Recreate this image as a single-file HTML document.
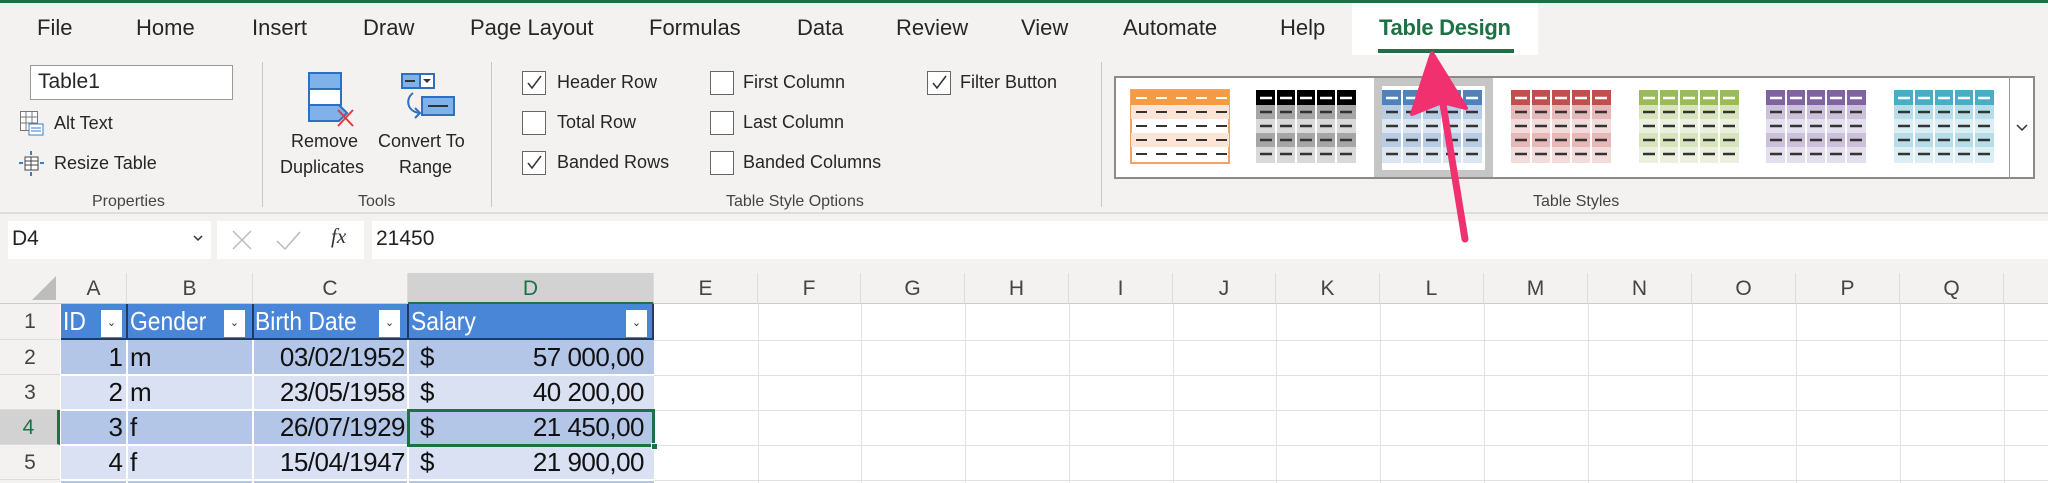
<!DOCTYPE html>
<html><head><meta charset="utf-8"><style>
*{margin:0;padding:0;box-sizing:border-box}
body{width:2048px;height:483px;overflow:hidden;background:#f3f2f1;font-family:"Liberation Sans",sans-serif;position:relative;color:#222}
.a{position:absolute;white-space:nowrap}
.tab{position:absolute;top:15px;font-size:22px;color:#262626}
.t{font-size:18px;color:#262626}
.lbl{font-size:16px;color:#444}
.cb{position:absolute;width:24px;height:24px;border:1px solid #666;background:#fff}
.cb svg{position:absolute;left:2px;top:2px}
.sep{position:absolute;top:62px;width:1px;height:145px;background:#c8c8c8}
.cell{position:absolute;font-size:26px;color:#111;font-family:"Liberation Sans",sans-serif}
.hd{transform:scaleX(0.88);transform-origin:left center;color:#fff}
.ch{position:absolute;top:273px;height:31px;font-size:21px;color:#444;text-align:center;line-height:31px;border-right:1px solid #dcdcdc}
.rh{position:absolute;left:0;width:60px;font-size:21px;color:#444;text-align:center;border-bottom:1px solid #dcdcdc}
.fb{position:absolute;width:21px;height:27px;background:#fff;top:310px;font-size:11px;color:#333;text-align:center;line-height:27px}
</style></head><body>
<div class="a" style="left:0;top:0;width:2048px;height:3px;background:#1e7145"></div>
<div class="tab" style="left:37px">File</div>
<div class="tab" style="left:136px">Home</div>
<div class="tab" style="left:252px">Insert</div>
<div class="tab" style="left:363px">Draw</div>
<div class="tab" style="left:470px">Page Layout</div>
<div class="tab" style="left:649px">Formulas</div>
<div class="tab" style="left:797px">Data</div>
<div class="tab" style="left:896px">Review</div>
<div class="tab" style="left:1021px">View</div>
<div class="tab" style="left:1123px">Automate</div>
<div class="tab" style="left:1280px">Help</div>
<div class="a" style="left:1352px;top:3px;width:186px;height:52px;background:#fff"></div>
<div class="tab" style="left:1379px;color:#1e7145;font-weight:bold;letter-spacing:-0.3px">Table Design</div>
<div class="a" style="left:1378px;top:49px;width:136px;height:4px;background:#1e7145"></div>

<div class="a" style="left:0;top:212px;width:2048px;height:2px;background:#ddd"></div>
<div class="a" style="left:0;top:214px;width:2048px;height:62px;background:#f3f2f1"></div>

<div class="a" style="left:30px;top:65px;width:203px;height:35px;background:#fff;border:1px solid #999"></div>
<div class="a t" style="left:38px;top:70px;font-size:21px">Table1</div>
<svg class="a" style="left:20px;top:111px" width="26" height="26"><rect x="0.5" y="0.5" width="17" height="19" fill="#fff" stroke="#777"/><path d="M0 6h18M0 12h18M6 0v20M12 0v20" stroke="#777"/><rect x="9" y="13" width="14" height="11" fill="#fff" stroke="#3b7dc8"/><path d="M11 17h10M11 20h10" stroke="#3b7dc8"/></svg>
<div class="a t" style="left:54px;top:113px">Alt Text</div>
<svg class="a" style="left:18px;top:150px" width="28" height="28"><rect x="7" y="7" width="13" height="13" fill="#fff" stroke="#444"/><path d="M7 11h13M7 15h13M13 7v13" stroke="#444"/><path d="M13 1v4M13 22v4M1 13h4M22 13h4" stroke="#3b7dc8" stroke-width="2"/></svg>
<div class="a t" style="left:54px;top:153px">Resize Table</div>
<div class="a lbl" style="left:92px;top:193px">Properties</div>
<div class="sep" style="left:262px"></div>

<svg class="a" style="left:308px;top:72px" width="50" height="55"><rect x="1" y="1" width="32" height="16" fill="#7fb2e8" stroke="#2f6fbf" stroke-width="2"/><rect x="1" y="17" width="32" height="16" fill="#fff" stroke="#2f6fbf" stroke-width="2"/><path d="M1 33h30l8 8-8 8H1z" fill="#7fb2e8" stroke="#2f6fbf" stroke-width="2"/><path d="M30 38l15 16M45 38L30 54" stroke="#e03a3a" stroke-width="2"/></svg>
<div class="a t" style="left:291px;top:131px">Remove</div>
<div class="a t" style="left:280px;top:157px">Duplicates</div>
<svg class="a" style="left:401px;top:73px" width="56" height="50"><rect x="1" y="1" width="18" height="14" fill="#7fb2e8" stroke="#2f6fbf" stroke-width="2"/><rect x="19" y="1" width="14" height="14" fill="#fff" stroke="#2f6fbf" stroke-width="2"/><path d="M4 8h10" stroke="#333" stroke-width="2"/><path d="M22 6l4 4 4-4z" fill="#333"/><rect x="21" y="24" width="32" height="18" fill="#7fb2e8" stroke="#2f6fbf" stroke-width="2"/><path d="M27 33h20" stroke="#333" stroke-width="2"/><path d="M12 20c-8 6-6 18 6 20" fill="none" stroke="#2f6fbf" stroke-width="2"/><path d="M14 35l5 5-5 5" fill="none" stroke="#2f6fbf" stroke-width="2"/></svg>
<div class="a t" style="left:378px;top:131px">Convert To</div>
<div class="a t" style="left:399px;top:157px">Range</div>
<div class="a lbl" style="left:358px;top:193px">Tools</div>
<div class="sep" style="left:491px"></div>

<div class="cb" style="left:522px;top:71px"><svg width="18" height="18"><path d="M3 9l4 5 9-12" fill="none" stroke="#333" stroke-width="1.5"/></svg></div>
<div class="a t" style="left:557px;top:72px">Header Row</div>
<div class="cb" style="left:522px;top:111px"></div>
<div class="a t" style="left:557px;top:112px">Total Row</div>
<div class="cb" style="left:522px;top:151px"><svg width="18" height="18"><path d="M3 9l4 5 9-12" fill="none" stroke="#333" stroke-width="1.5"/></svg></div>
<div class="a t" style="left:557px;top:152px">Banded Rows</div>
<div class="cb" style="left:710px;top:71px"></div>
<div class="a t" style="left:743px;top:72px">First Column</div>
<div class="cb" style="left:710px;top:111px"></div>
<div class="a t" style="left:743px;top:112px">Last Column</div>
<div class="cb" style="left:710px;top:151px"></div>
<div class="a t" style="left:743px;top:152px">Banded Columns</div>
<div class="cb" style="left:927px;top:71px"><svg width="18" height="18"><path d="M3 9l4 5 9-12" fill="none" stroke="#333" stroke-width="1.5"/></svg></div>
<div class="a t" style="left:960px;top:72px">Filter Button</div>
<div class="a lbl" style="left:726px;top:193px">Table Style Options</div>
<div class="sep" style="left:1101px"></div>

<div class="a" style="left:1114px;top:76px;width:921px;height:103px;background:#fff;border:2px solid #8a8a8a"></div>
<div class="a" style="left:2009px;top:76px;width:26px;height:103px;border-left:1px solid #999"></div>
<svg class="a" style="left:2015px;top:123px" width="14" height="10"><path d="M2 2l5 5 5-5" fill="none" stroke="#333" stroke-width="1.5"/></svg>
<div class="a" style="left:1374px;top:78px;width:119px;height:99px;background:#c6c6c6"></div>
<div class="a" style="left:1382px;top:86px;width:103px;height:84px;background:#fff"></div>
<svg class="a" style="left:1128px;top:88px" width="880" height="80">
<defs>
<g id="dl"><path d="M5 0h11M25 0h11M45 0h11M65 0h11M85 0h11" stroke-width="2"/></g>
<g id="dc"><path d="M4 0h12M24 0h12M44 0h12M64 0h12M84 0h12" stroke-width="2.5"/></g>
<g id="vs"><path d="M20 0v73M40 0v73M60 0v73M80 0v73" stroke="#fff" stroke-width="2"/></g>
</defs>
<g transform="translate(3,2)"><rect x="0" y="0" width="98" height="73" fill="#fff" stroke="#f4a366" stroke-width="2"/><rect width="98" height="15" fill="#f59a45"/><rect y="15" width="98" height="14" fill="#fce4d6"/><rect y="43" width="98" height="14" fill="#fce4d6"/>
<use href="#dl" y="8" stroke="#fff"/><use href="#dl" y="22" stroke="#333"/><use href="#dl" y="36" stroke="#333"/><use href="#dl" y="50" stroke="#333"/><use href="#dl" y="64" stroke="#333"/></g>
<g transform="translate(128,2)"><rect width="100" height="15" fill="#000"/><rect y="15" width="100" height="14" fill="#a6a6a6"/><rect y="29" width="100" height="14" fill="#d9d9d9"/><rect y="43" width="100" height="14" fill="#a6a6a6"/><rect y="57" width="100" height="16" fill="#d9d9d9"/><use href="#vs"/>
<use href="#dc" y="8" stroke="#fff"/><use href="#dc" y="22" stroke="#333"/><use href="#dc" y="36" stroke="#333"/><use href="#dc" y="50" stroke="#333"/><use href="#dc" y="64" stroke="#333"/></g>
<g transform="translate(254,2)"><rect width="100" height="15" fill="#4f81bd"/><rect y="15" width="100" height="14" fill="#b8cce4"/><rect y="29" width="100" height="14" fill="#dce6f1"/><rect y="43" width="100" height="14" fill="#b8cce4"/><rect y="57" width="100" height="16" fill="#dce6f1"/><use href="#vs"/>
<use href="#dc" y="8" stroke="#fff"/><use href="#dc" y="22" stroke="#333"/><use href="#dc" y="36" stroke="#333"/><use href="#dc" y="50" stroke="#333"/><use href="#dc" y="64" stroke="#333"/></g>
<g transform="translate(383,2)"><rect width="100" height="15" fill="#c0504d"/><rect y="15" width="100" height="14" fill="#e6b8b7"/><rect y="29" width="100" height="14" fill="#f2dcdb"/><rect y="43" width="100" height="14" fill="#e6b8b7"/><rect y="57" width="100" height="16" fill="#f2dcdb"/><use href="#vs"/>
<use href="#dc" y="8" stroke="#fff"/><use href="#dc" y="22" stroke="#333"/><use href="#dc" y="36" stroke="#333"/><use href="#dc" y="50" stroke="#333"/><use href="#dc" y="64" stroke="#333"/></g>
<g transform="translate(511,2)"><rect width="100" height="15" fill="#9bbb59"/><rect y="15" width="100" height="14" fill="#d8e4bc"/><rect y="29" width="100" height="14" fill="#ebf1de"/><rect y="43" width="100" height="14" fill="#d8e4bc"/><rect y="57" width="100" height="16" fill="#ebf1de"/><use href="#vs"/>
<use href="#dc" y="8" stroke="#fff"/><use href="#dc" y="22" stroke="#333"/><use href="#dc" y="36" stroke="#333"/><use href="#dc" y="50" stroke="#333"/><use href="#dc" y="64" stroke="#333"/></g>
<g transform="translate(638,2)"><rect width="100" height="15" fill="#8064a2"/><rect y="15" width="100" height="14" fill="#ccc0da"/><rect y="29" width="100" height="14" fill="#e4dfec"/><rect y="43" width="100" height="14" fill="#ccc0da"/><rect y="57" width="100" height="16" fill="#e4dfec"/><use href="#vs"/>
<use href="#dc" y="8" stroke="#fff"/><use href="#dc" y="22" stroke="#333"/><use href="#dc" y="36" stroke="#333"/><use href="#dc" y="50" stroke="#333"/><use href="#dc" y="64" stroke="#333"/></g>
<g transform="translate(766,2)"><rect width="100" height="15" fill="#4bacc6"/><rect y="15" width="100" height="14" fill="#b7dee8"/><rect y="29" width="100" height="14" fill="#daeef3"/><rect y="43" width="100" height="14" fill="#b7dee8"/><rect y="57" width="100" height="16" fill="#daeef3"/><use href="#vs"/>
<use href="#dc" y="8" stroke="#fff"/><use href="#dc" y="22" stroke="#333"/><use href="#dc" y="36" stroke="#333"/><use href="#dc" y="50" stroke="#333"/><use href="#dc" y="64" stroke="#333"/></g>
</svg>
<div class="a lbl" style="left:1533px;top:193px">Table Styles</div>

<div class="a" style="left:8px;top:221px;width:203px;height:38px;background:#fff"></div>
<div class="a" style="left:12px;top:227px;font-size:21px;color:#222">D4</div>
<svg class="a" style="left:192px;top:234px" width="12" height="10"><path d="M2 2l4 4 4-4" fill="none" stroke="#333" stroke-width="1.5"/></svg>
<div class="a" style="left:217px;top:221px;width:147px;height:38px;background:#fff"></div>
<svg class="a" style="left:230px;top:228px" width="120" height="26"><path d="M3 3l18 18M21 3L3 21" stroke="#bbb" stroke-width="1.5"/><path d="M47 13l8 8 15-17" fill="none" stroke="#bbb" stroke-width="1.5"/></svg>
<div class="a" style="left:331px;top:224px;font-size:21px;font-style:italic;font-family:'Liberation Serif',serif;color:#333">fx</div>
<div class="a" style="left:372px;top:221px;width:1676px;height:38px;background:#fff"></div>
<div class="a" style="left:376px;top:227px;font-size:21px;color:#222">21450</div>

<div class="a" style="left:0;top:272px;width:2048px;height:211px;background:#fff"></div>
<div class="a" style="left:0;top:272px;width:60px;height:211px;background:#f3f2f1"></div>
<div class="a" style="left:0;top:272px;width:2048px;height:32px;background:#f3f2f1;border-bottom:1px solid #ccc"></div>
<svg class="a" style="left:30px;top:274px" width="28" height="28"><path d="M26 2V26H2z" fill="#bdbdbd"/></svg>
<div class="ch" style="left:61px;width:66px">A</div>
<div class="ch" style="left:127px;width:126px">B</div>
<div class="ch" style="left:253px;width:155px">C</div>
<div class="ch" style="left:408px;width:246px;background:#d2d2d2;color:#1e7145;border-bottom:3px solid #1e7145;height:32px">D</div>
<div class="ch" style="left:654px;width:104px">E</div>
<div class="ch" style="left:758px;width:103px">F</div>
<div class="ch" style="left:861px;width:104px">G</div>
<div class="ch" style="left:965px;width:104px">H</div>
<div class="ch" style="left:1069px;width:104px">I</div>
<div class="ch" style="left:1173px;width:103px">J</div>
<div class="ch" style="left:1276px;width:104px">K</div>
<div class="ch" style="left:1380px;width:104px">L</div>
<div class="ch" style="left:1484px;width:104px">M</div>
<div class="ch" style="left:1588px;width:104px">N</div>
<div class="ch" style="left:1692px;width:104px">O</div>
<div class="ch" style="left:1796px;width:104px">P</div>
<div class="ch" style="left:1900px;width:104px">Q</div>
<svg class="a" style="left:654px;top:304px" width="1394" height="179"><g stroke="#e1e1e1" stroke-width="1"><path d="M104.5 0v179M207.5 0v179M311.5 0v179M415.5 0v179M519.5 0v179M622.5 0v179M726.5 0v179M830.5 0v179M934.5 0v179M1038.5 0v179M1142.5 0v179M1246.5 0v179M1350.5 0v179"/><path d="M0 36.5h1394M0 71.5h1394M0 106.5h1394M0 141.5h1394M0 176.5h1394"/></g></svg>
<div class="rh" style="top:304px;height:36px;line-height:36px">1</div>
<div class="rh" style="top:340px;height:35px;line-height:35px">2</div>
<div class="rh" style="top:375px;height:35px;line-height:35px">3</div>
<div class="rh" style="top:410px;height:35px;line-height:35px;background:#d2d2d2;color:#1e7145;border-right:3px solid #1e7145">4</div>
<div class="rh" style="top:445px;height:35px;line-height:35px">5</div>
<div class="a" style="left:61px;top:304px;width:593px;height:36px;background:#4a86d8;border-bottom:2px solid #1f3a63"></div>
<div class="a" style="left:61px;top:340px;width:593px;height:35px;background:#b4c6e7"></div>
<div class="a" style="left:61px;top:375px;width:593px;height:35px;background:#d9e1f2"></div>
<div class="a" style="left:61px;top:410px;width:593px;height:35px;background:#b4c6e7"></div>
<div class="a" style="left:61px;top:445px;width:593px;height:35px;background:#d9e1f2"></div>
<div class="a" style="left:61px;top:480px;width:593px;height:3px;background:#b4c6e7"></div>
<svg class="a" style="left:61px;top:304px" width="593" height="179"><g stroke="#fff" stroke-width="2"><path d="M66 36v143M192 36v143M347 36v143"/><path d="M0 71h593M0 106h593M0 141h593M0 176h593"/></g><g stroke="#1f3a63" stroke-width="2"><path d="M66 0v36M192 0v36M347 0v36M592 0v36"/></g></svg>
<div class="fb" style="left:101px">⌄</div>
<div class="fb" style="left:224px">⌄</div>
<div class="fb" style="left:379px">⌄</div>
<div class="fb" style="left:626px">⌄</div>
<div class="cell hd" style="left:63px;top:306px">ID</div>
<div class="cell hd" style="left:130px;top:306px">Gender</div>
<div class="cell hd" style="left:255px;top:306px">Birth Date</div>
<div class="cell hd" style="left:411px;top:306px">Salary</div>
<div class="cell" style="left:61px;width:62px;text-align:right;top:342px">1</div>
<div class="cell" style="left:130px;top:342px">m</div>
<div class="cell" style="left:253px;width:152px;text-align:right;top:342px;letter-spacing:-0.5px">03/02/1952</div>
<div class="cell" style="left:420px;top:342px">$</div>
<div class="cell" style="left:480px;width:164px;text-align:right;top:342px;letter-spacing:-0.5px">57 000,00</div>
<div class="cell" style="left:61px;width:62px;text-align:right;top:377px">2</div>
<div class="cell" style="left:130px;top:377px">m</div>
<div class="cell" style="left:253px;width:152px;text-align:right;top:377px;letter-spacing:-0.5px">23/05/1958</div>
<div class="cell" style="left:420px;top:377px">$</div>
<div class="cell" style="left:480px;width:164px;text-align:right;top:377px;letter-spacing:-0.5px">40 200,00</div>
<div class="cell" style="left:61px;width:62px;text-align:right;top:412px">3</div>
<div class="cell" style="left:130px;top:412px">f</div>
<div class="cell" style="left:253px;width:152px;text-align:right;top:412px;letter-spacing:-0.5px">26/07/1929</div>
<div class="cell" style="left:420px;top:412px">$</div>
<div class="cell" style="left:480px;width:164px;text-align:right;top:412px;letter-spacing:-0.5px">21 450,00</div>
<div class="cell" style="left:61px;width:62px;text-align:right;top:447px">4</div>
<div class="cell" style="left:130px;top:447px">f</div>
<div class="cell" style="left:253px;width:152px;text-align:right;top:447px;letter-spacing:-0.5px">15/04/1947</div>
<div class="cell" style="left:420px;top:447px">$</div>
<div class="cell" style="left:480px;width:164px;text-align:right;top:447px;letter-spacing:-0.5px">21 900,00</div>
<div class="a" style="left:407px;top:409px;width:248px;height:38px;border:3px solid #1e7145"></div>
<div class="a" style="left:651px;top:443px;width:7px;height:7px;background:#1e7145;border:1px solid #fff"></div>

<svg class="a" style="left:1390px;top:40px" width="100" height="210"><path d="M75 199L52 58" stroke="#f0306f" stroke-width="7" stroke-linecap="round" fill="none"/><path d="M42 13L22 74L52 62L76 68z" fill="#f0306f" stroke="#f0306f" stroke-width="4" stroke-linejoin="round"/></svg>
</body></html>
